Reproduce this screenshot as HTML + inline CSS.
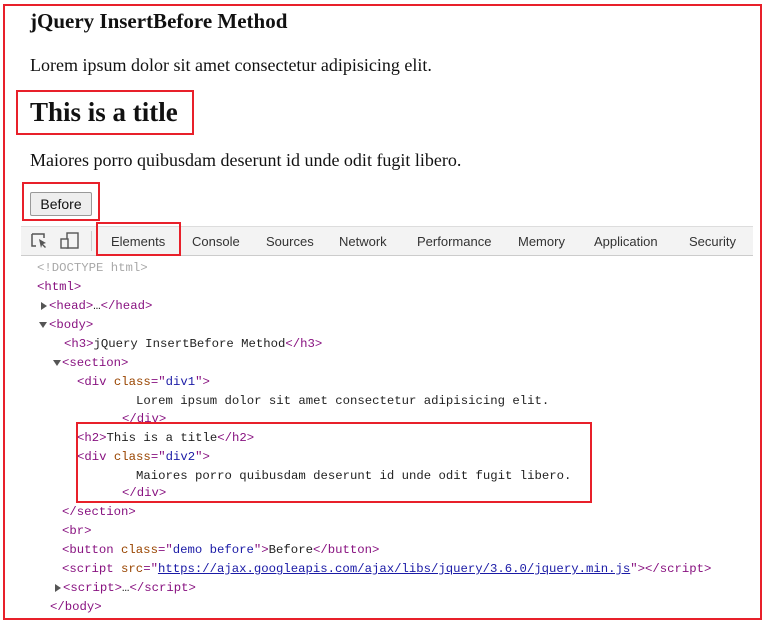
<!DOCTYPE html>
<html><head><style>
*{margin:0;padding:0;box-sizing:border-box}
body{width:768px;height:624px;background:#fff;position:relative;overflow:hidden;font-family:"Liberation Serif",serif;color:#111}
.a{position:absolute;white-space:pre}
.box{position:absolute;border:2px solid #e8202a}
.tab{position:absolute;top:234px;font:13px "Liberation Sans",sans-serif;color:#333}
.c{position:absolute;font:12.3px/19px "Liberation Mono",monospace;white-space:pre;color:#222}
.t{color:#881280}.at{color:#994500}.v{color:#1a1aa6}.g{color:#a8a8a8}
.rt{position:absolute;width:0;height:0;border-top:4px solid transparent;border-bottom:4px solid transparent;border-left:6px solid #555}
.dn{position:absolute;width:0;height:0;border-left:4px solid transparent;border-right:4px solid transparent;border-top:6px solid #555}
</style></head><body>
<div class="box" style="left:3px;top:4px;width:759px;height:616px"></div>
<div class="a" style="left:30px;top:9px;font-weight:bold;font-size:21px">jQuery InsertBefore Method</div>
<div class="a" style="left:30px;top:55px;font-size:18px">Lorem ipsum dolor sit amet consectetur adipisicing elit.</div>
<div class="a" style="left:30px;top:97px;font-weight:bold;font-size:27px">This is a title</div>
<div class="a" style="left:30px;top:150px;font-size:18px">Maiores porro quibusdam deserunt id unde odit fugit libero.</div>
<div class="box" style="left:16px;top:90px;width:178px;height:45px"></div>
<div style="position:absolute;left:30px;top:192px;width:62px;height:24px;border:1px solid #999;border-radius:2px;background:#eee;font:14px 'Liberation Sans',sans-serif;text-align:center;line-height:22px">Before</div>
<div class="box" style="left:22px;top:182px;width:78px;height:39px"></div>
<div style="position:absolute;left:21px;top:226px;width:732px;height:30px;background:#f3f3f3;border-top:1px solid #ddd;border-bottom:1px solid #ccc"></div>
<svg style="position:absolute;left:31px;top:232px" width="50" height="18" viewBox="0 0 50 18"><path d="M1 2h12v4M1 2v12h4" fill="none" stroke="#555" stroke-width="1.5"/><path d="M8 7l7 4-3 1 3 3-1 1-3-3-1 3z" fill="#555"/><rect x="36" y="1" width="11" height="15" fill="none" stroke="#555" stroke-width="1.4"/><rect x="30" y="7" width="7" height="9" fill="#f3f3f3" stroke="#555" stroke-width="1.4"/></svg>
<div style="position:absolute;left:91px;top:231px;width:1px;height:20px;background:#ccc"></div>
<div class="tab" style="left:111px">Elements</div>
<div class="tab" style="left:192px">Console</div>
<div class="tab" style="left:266px">Sources</div>
<div class="tab" style="left:339px">Network</div>
<div class="tab" style="left:417px">Performance</div>
<div class="tab" style="left:518px">Memory</div>
<div class="tab" style="left:594px">Application</div>
<div class="tab" style="left:689px">Security</div>
<div class="box" style="left:96px;top:222px;width:85px;height:34px"></div>
<div class="c g" style="left:37px;top:259px">&lt;!DOCTYPE html&gt;</div>
<div class="c t" style="left:37px;top:278px">&lt;html&gt;</div>
<div class="rt" style="left:41px;top:302px"></div>
<div class="c t" style="left:49px;top:297px">&lt;head&gt;<span style="color:#222">…</span>&lt;/head&gt;</div>
<div class="dn" style="left:39px;top:322px"></div>
<div class="c t" style="left:49px;top:316px">&lt;body&gt;</div>
<div class="c" style="left:64px;top:335px"><span class="t">&lt;h3&gt;</span>jQuery InsertBefore Method<span class="t">&lt;/h3&gt;</span></div>
<div class="dn" style="left:53px;top:360px"></div>
<div class="c t" style="left:62px;top:354px">&lt;section&gt;</div>
<div class="c" style="left:77px;top:373px"><span class="t">&lt;div </span><span class="at">class</span><span class="t">="</span><span class="v">div1</span><span class="t">"&gt;</span></div>
<div class="c" style="left:136px;top:392px">Lorem ipsum dolor sit amet consectetur adipisicing elit.</div>
<div class="c t" style="left:122px;top:410px">&lt;/div&gt;</div>
<div class="c" style="left:77px;top:429px"><span class="t">&lt;h2&gt;</span>This is a title<span class="t">&lt;/h2&gt;</span></div>
<div class="c" style="left:77px;top:448px"><span class="t">&lt;div </span><span class="at">class</span><span class="t">="</span><span class="v">div2</span><span class="t">"&gt;</span></div>
<div class="c" style="left:136px;top:467px">Maiores porro quibusdam deserunt id unde odit fugit libero.</div>
<div class="c t" style="left:122px;top:484px">&lt;/div&gt;</div>
<div class="box" style="left:76px;top:422px;width:516px;height:81px"></div>
<div class="c t" style="left:62px;top:503px">&lt;/section&gt;</div>
<div class="c t" style="left:62px;top:522px">&lt;br&gt;</div>
<div class="c" style="left:62px;top:541px"><span class="t">&lt;button </span><span class="at">class</span><span class="t">="</span><span class="v">demo before</span><span class="t">"&gt;</span>Before<span class="t">&lt;/button&gt;</span></div>
<div class="c" style="left:62px;top:560px"><span class="t">&lt;script </span><span class="at">src</span><span class="t">="</span><span style="color:#1a1aa6;text-decoration:underline">https://ajax.googleapis.com/ajax/libs/jquery/3.6.0/jquery.min.js</span><span class="t">"&gt;&lt;/script&gt;</span></div>
<div class="rt" style="left:55px;top:584px"></div>
<div class="c t" style="left:63px;top:579px">&lt;script&gt;<span style="color:#222">…</span>&lt;/script&gt;</div>
<div class="c t" style="left:50px;top:598px">&lt;/body&gt;</div>
</body></html>
